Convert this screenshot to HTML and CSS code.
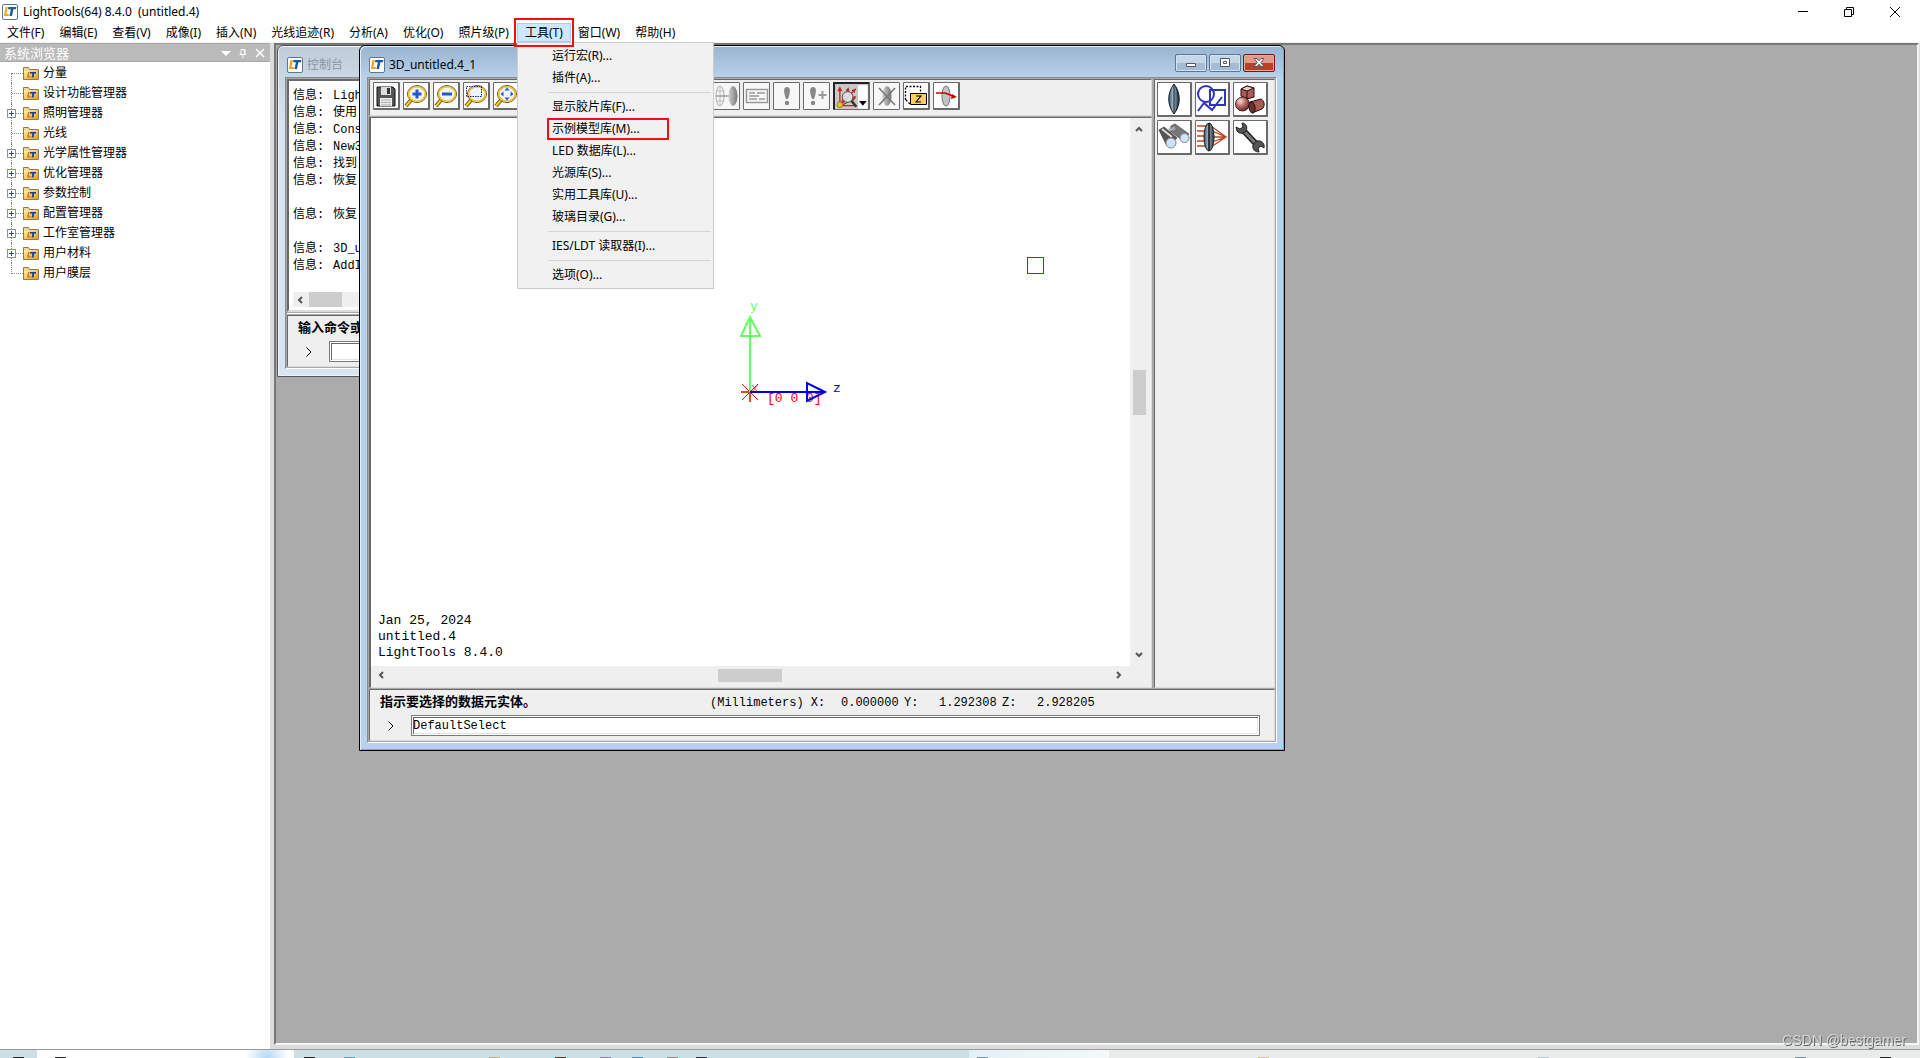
FILE: index.html
```
<!DOCTYPE html>
<html lang="zh-CN">
<head>
    <meta charset="UTF-8">
    <meta name="viewport" content="width=device-width, initial-scale=1.0">
    <title>LightTools(64) 8.4.0 (untitled.4)</title>
    <link rel="stylesheet" href="styles.css">
</head>
<body>

    <!-- Shared icons -->
    <svg class="sprite" aria-hidden="true">
        <defs>
            <linearGradient id="folderFill" x1="0" y1="0" x2="1" y2="1">
                <stop offset="0" stop-color="#fff0a8"/><stop offset="1" stop-color="#e0a020"/>
            </linearGradient>
            <linearGradient id="glassFill" x1="0" y1="0" x2="1" y2="0">
                <stop offset="0" stop-color="#3c5468"/><stop offset=".4" stop-color="#9fb6c8"/><stop offset="1" stop-color="#26323e"/>
            </linearGradient>
            <linearGradient id="grayFill" x1="0" y1="0" x2="1" y2="0">
                <stop offset="0" stop-color="#d0d0d0"/><stop offset="1" stop-color="#777"/>
            </linearGradient>
            <radialGradient id="ballFill" cx=".35" cy=".3" r=".75">
                <stop offset="0" stop-color="#ffdcd6"/><stop offset=".5" stop-color="#b86a64"/><stop offset="1" stop-color="#5a2422"/>
            </radialGradient>
        </defs>
        <symbol id="logo" viewBox="0 0 16 16">
            <rect x=".5" y=".5" width="15" height="15" rx="1.5" fill="#fff" stroke="#5c7896"/>
            <path d="M3.5 3h2.3L4.4 10H7l-.4 2H1.8z" fill="#f0a818"/>
            <path d="M6.4 3h8l-.4 2.2h-2.6L10 12H7.5l1.4-6.8H6z" fill="#1c5a9c"/>
        </symbol>
        <symbol id="folder" viewBox="0 0 16 14">
            <path d="M.5 1.5h5l1 2h9v10H.5z" fill="#e9d9a0" stroke="#8f7a48"/>
            <path d="M1 4.5h14v8.5H1z" fill="url(#folderFill)"/>
            <path d="M5 6h1.6L6 10h1.5v1.6H4z" fill="#e07c10"/>
            <path d="M7 6h6v1.6h-1.8l-.7 4H8.7l.6-4H7z" fill="#173f9c"/>
        </symbol>
        <symbol id="save" viewBox="0 0 24 24">
            <path d="M3 3h16l2 2v17H3z" fill="#555" stroke="#111"/>
            <path d="M7 3h10v8H7z" fill="#ddd"/><path d="M13 4h3v6h-3z" fill="#333"/>
            <path d="M6 14h12v8H6z" fill="#eee"/><path d="M7 16h10M7 18.500h10M7 21h10" stroke="#aaa"/>
        </symbol>
        <symbol id="lens" viewBox="0 0 24 24">
            <path d="M7 16l-5 6" stroke="#6e5614" stroke-width="4"/><path d="M7 16l-5 6" stroke="#f2c838" stroke-width="2"/>
            <ellipse cx="13" cy="10" rx="9.500" ry="8.500" fill="#eef5fb" stroke="#6e5614"/>
            <ellipse cx="13" cy="10" rx="8.300" ry="7.300" fill="none" stroke="#edc030" stroke-width="1.600"/>
        </symbol>
        <symbol id="zoomIn" viewBox="0 0 24 24"><use href="#lens"/><path d="M13 5.500v9M8.500 10h9" stroke="#2858c8" stroke-width="3"/></symbol>
        <symbol id="zoomOut" viewBox="0 0 24 24"><use href="#lens"/><path d="M8 10h10" stroke="#2858c8" stroke-width="3"/></symbol>
        <symbol id="zoomBox" viewBox="0 0 24 24"><use href="#lens"/><path d="M2.500 2.500h15v10h-15z" fill="none" stroke="#112a88" stroke-dasharray="1.500 1"/></symbol>
        <symbol id="zoomFit" viewBox="0 0 24 24"><use href="#lens"/><path d="M13 3.500l2.500 3h-5zM13 16.500l-2.500-3h5zM6.500 10l3-2.500v5zM19.500 10l-3 2.500v-5z" fill="#2858c8"/></symbol>
        <symbol id="lensPair" viewBox="0 0 24 24">
            <ellipse cx="5" cy="12" rx="4" ry="10" fill="none" stroke="#aaa"/><path d="M5 2v20M1 7h8M1 17h8" stroke="#bbb"/>
            <path d="M1 12h14" stroke="#777"/><ellipse cx="18" cy="12" rx="4.500" ry="10" fill="url(#grayFill)"/>
        </symbol>
        <symbol id="card" viewBox="0 0 24 24">
            <path d="M1.500 5.500h21v13h-21z" fill="#f7f7f7" stroke="#999" stroke-width="1.500"/>
            <path d="M4 9h6M12 9h8M4 12h10M4 15h8M14 15h6" stroke="#999" stroke-width="1.500"/>
        </symbol>
        <symbol id="bang" viewBox="0 0 24 24">
            <path d="M12 3c4 0 3.500 5 1 12h-2c-2.500-7-3-12 1-12z" fill="#888"/><circle cx="12" cy="19" r="2.200" fill="#888"/>
        </symbol>
        <symbol id="bangPlus" viewBox="0 0 24 24">
            <path d="M8 3c4 0 3.500 5 1 12H7C4.500 8 4 3 8 3z" fill="#888"/><circle cx="8" cy="19" r="2.200" fill="#888"/>
            <path d="M17.500 7v8M13.500 11h8" stroke="#999" stroke-width="2"/>
        </symbol>
        <symbol id="rays" viewBox="0 0 24 24">
            <path d="M5 20V4M6 19L13 5M7 19L20 5M8 20l13-7M8 21h13" stroke="#c82018" stroke-width="1.300"/>
            <path d="M5 1l2.500 5h-5zM14 2l1 5-4-2zM22 3l-2 5-3-3zM22 11l-3 5-2-4z" fill="#c82018"/>
            <circle cx="5" cy="20" r="3" fill="#e8c030" stroke="#806010" stroke-width=".7"/>
            <circle cx="13" cy="12" r="5.500" fill="#e2e6ec" fill-opacity=".85" stroke="#555"/><path d="M17 16l5 6" stroke="#333" stroke-width="2.500"/>
        </symbol>
        <symbol id="noLens" viewBox="0 0 24 24">
            <ellipse cx="12" cy="12" rx="4.500" ry="10" fill="url(#grayFill)"/><path d="M4 4l16 17M20 4L4 21" stroke="#777" stroke-width="1.600"/>
        </symbol>
        <symbol id="zPlane" viewBox="0 0 24 24">
            <path d="M1.500 16V2.500h15V9M2 16l5 5" fill="none" stroke="#000" stroke-width="1.300" stroke-dasharray="2 1.500"/>
            <path d="M6.500 9.500h16v11h-16z" fill="#ffcf60" stroke="#000"/>
            <path d="M12 12h5l-5 6h5" fill="none" stroke="#000" stroke-width="1.100"/>
        </symbol>
        <symbol id="rayLens" viewBox="0 0 24 24">
            <ellipse cx="12" cy="12" rx="4" ry="10" fill="none" stroke="#666"/><path d="M10 3v18M12 2v20M14 3v18" stroke="#888"/>
            <path d="M2 9h9l8 3" fill="none" stroke="#c00000" stroke-width="1.500"/><path d="M23 13l-6 2 1-5z" fill="#c00000"/>
        </symbol>
        <symbol id="glass" viewBox="0 0 32 32">
            <path d="M16 1c7 9 7 21 0 30C9 22 9 10 16 1z" fill="url(#glassFill)" stroke="#10202c"/>
            <path d="M16 1v30M18 4c3 8 3 16 0 24" fill="none" stroke="#1a2c3a"/>
        </symbol>
        <symbol id="shapes" viewBox="0 0 32 32">
            <g fill="none" stroke="#2c34c0" stroke-width="2"><circle cx="10" cy="11" r="8"/><path d="M14 7h15v15H14zM2 28l6-8 8 7L26 14"/></g>
        </symbol>
        <symbol id="solids" viewBox="0 0 32 32">
            <path d="M7 6l6-3 7 2v9l-7 2-6-3z" fill="#a85c58" stroke="#2a0c0c"/><path d="M7 6l6 2 7-3-7-2z" fill="#f0cfc9" stroke="#2a0c0c"/><path d="M13 8v8" stroke="#2a0c0c"/>
            <circle cx="8.500" cy="21" r="7" fill="url(#ballFill)" stroke="#2a0c0c" stroke-width=".8"/>
            <path d="M16 19l11-3c4 2 4 8 1 10l-10 4z" fill="#a85c58" stroke="#2a0c0c"/><ellipse cx="18" cy="24.500" rx="3" ry="5.500" fill="#6e2e2c" stroke="#2a0c0c" transform="rotate(-10 18 24.500)"/>
        </symbol>
        <symbol id="binoculars" viewBox="0 0 32 32">
            <path d="M13 5l4-2 14 10-7 6-12-9z" fill="#777" stroke="#333" stroke-width=".6"/>
            <path d="M1 9l5-3 13 11-10 8z" fill="#555" stroke="#222" stroke-width=".6"/><path d="M4 8l10 8" stroke="#ddd" stroke-width="2"/>
            <path d="M11 9l6-2" stroke="#aaa" stroke-width="3"/>
            <circle cx="13" cy="22" r="5" fill="#cfe4fa" stroke="#888"/><circle cx="26.500" cy="17" r="4.500" fill="#cfe4fa" stroke="#888"/>
        </symbol>
        <symbol id="focus" viewBox="0 0 32 32">
            <path d="M1 5h10M1 10h10M1 15h10M1 20h10M1 25h10M15 5l15 11-15 10M16 10l14 6-14 5M16 16h14" fill="none" stroke="#b84828" stroke-width="1.300"/>
            <ellipse cx="13" cy="16" rx="5" ry="14" fill="url(#glassFill)" stroke="#222"/><path d="M13 2v28" stroke="#111" stroke-width="1.500"/>
        </symbol>
        <symbol id="wrench" viewBox="0 0 32 32">
            <path d="M9 9l15 16" stroke="#222" stroke-width="6"/><path d="M9 9l15 16" stroke="#777" stroke-width="3"/>
            <path d="M8 2c4 0 6 4 4 8-2 3-7 3-9 0l-1-4 4 2 3-2zM23 20c5-1 8 3 7 7l-3-2-3 2 1 4c-4 0-7-3-6-7 1-2 2-3 4-4z" fill="#555" stroke="#222"/>
        </symbol>
        <symbol id="chevron" viewBox="0 0 8 8"><path d="M6 1L3 4l3 3" fill="none" stroke="#555" stroke-width="2"/></symbol>
    </svg>

    <header class="titlebar">
        <svg class="logo"><use href="#logo"/></svg>
        <h1>LightTools(64) 8.4.0&nbsp; (untitled.4)</h1>
        <div class="titlebar-buttons">
            <button aria-label="最小化"><svg viewBox="0 0 10 10"><path d="M0 4.500h10"/></svg></button>
            <button aria-label="还原"><svg viewBox="0 0 10 10"><path d="M.5 2.500h7v7h-7zM2.500 2.500v-2h7v7h-2"/></svg></button>
            <button aria-label="关闭"><svg viewBox="0 0 10 10"><path d="M0 0l10 10M10 0L0 10"/></svg></button>
        </div>
    </header>

    <nav class="menubar">
        <button>文件(F)</button>
        <button>编辑(E)</button>
        <button>查看(V)</button>
        <button>成像(I)</button>
        <button>插入(N)</button>
        <button>光线追迹(R)</button>
        <button>分析(A)</button>
        <button>优化(O)</button>
        <button>照片级(P)</button>
        <div class="menu-holder">
            <button class="open" aria-expanded="true">工具(T)</button>
            <div class="dropdown">
                <button>运行宏(R)...</button>
                <button>插件(A)...</button>
                <hr>
                <button>显示胶片库(F)...</button>
                <button class="marked">示例模型库(M)...</button>
                <button>LED 数据库(L)...</button>
                <button>光源库(S)...</button>
                <button>实用工具库(U)...</button>
                <button>玻璃目录(G)...</button>
                <hr>
                <button>IES/LDT 读取器(I)...</button>
                <hr>
                <button>选项(O)...</button>
            </div>
        </div>
        <button>窗口(W)</button>
        <button>帮助(H)</button>
    </nav>

    <main class="workspace">
        <aside class="sidebar">
            <div class="sidebar-head">
                <h2>系统浏览器</h2>
                <button aria-label="选项"><svg viewBox="0 0 10 10"><path d="M0 3h10L5 8z" fill="#fff"/></svg></button>
                <button aria-label="固定"><svg viewBox="0 0 10 10"><path d="M3 6V1.500h4V6M1.500 6.500h7M5 6.500V10M6.500 2v4" fill="none" stroke="#fff"/></svg></button>
                <button aria-label="关闭"><svg viewBox="0 0 10 10"><path d="M1 1l8 8M9 1L1 9" stroke="#fff" stroke-width="1.500"/></svg></button>
            </div>
            <ul class="tree">
                <li><svg class="folder"><use href="#folder"/></svg>分量</li>
                <li><svg class="folder"><use href="#folder"/></svg>设计功能管理器</li>
                <li><button class="expand" aria-label="展开"></button><svg class="folder"><use href="#folder"/></svg>照明管理器</li>
                <li><svg class="folder"><use href="#folder"/></svg>光线</li>
                <li><button class="expand" aria-label="展开"></button><svg class="folder"><use href="#folder"/></svg>光学属性管理器</li>
                <li><button class="expand" aria-label="展开"></button><svg class="folder"><use href="#folder"/></svg>优化管理器</li>
                <li><button class="expand" aria-label="展开"></button><svg class="folder"><use href="#folder"/></svg>参数控制</li>
                <li><button class="expand" aria-label="展开"></button><svg class="folder"><use href="#folder"/></svg>配置管理器</li>
                <li><button class="expand" aria-label="展开"></button><svg class="folder"><use href="#folder"/></svg>工作室管理器</li>
                <li><button class="expand" aria-label="展开"></button><svg class="folder"><use href="#folder"/></svg>用户材料</li>
                <li><svg class="folder"><use href="#folder"/></svg>用户膜层</li>
            </ul>
        </aside>

        <div class="desktop">
            <!-- Console window -->
            <section class="window console">
                <div class="window-title">
                    <svg class="logo"><use href="#logo"/></svg>
                    <h2>控制台</h2>
                </div>
                <div class="client">
                    <div class="pane log">
                        <ul>
                            <li><span>信息:</span>Ligh</li>
                            <li><span>信息:</span>使用</li>
                            <li><span>信息:</span>Cons</li>
                            <li><span>信息:</span>New3</li>
                            <li><span>信息:</span>找到</li>
                            <li><span>信息:</span>恢复</li>
                            <li></li>
                            <li><span>信息:</span>恢复</li>
                            <li></li>
                            <li><span>信息:</span>3D_u</li>
                            <li><span>信息:</span>AddI</li>
                        </ul>
                        <div class="log-scroll">
                            <svg class="arrow"><use href="#chevron"/></svg>
                            <div class="thumb"></div>
                        </div>
                    </div>
                    <div class="pane command">
                        <label class="prompt" for="consoleInput">输入命令或</label>
                        <div class="command-row">
                            <svg class="caret" viewBox="0 0 6 10"><path d="M.5.5L5 5 .5 9.500"/></svg>
                            <input type="text" id="consoleInput">
                        </div>
                    </div>
                </div>
            </section>

            <!-- 3D view window -->
            <section class="window view3d">
                <div class="window-title">
                    <svg class="logo"><use href="#logo"/></svg>
                    <h2>3D_untitled.4_1</h2>
                    <div class="window-buttons">
                        <button aria-label="最小化"><svg viewBox="0 0 12 10"><path d="M1.500 5.500h9v3h-9z"/></svg></button>
                        <button aria-label="最大化"><svg viewBox="0 0 12 10"><path d="M1.500.5h9v8h-9zM4.500 3.500h3v2h-3z"/></svg></button>
                        <button class="close" aria-label="关闭"><svg viewBox="0 0 12 10"><path d="M1 .5h3l2 2.300L8 .5h3L7.800 4.500 11 8.500H8L6 6.200 4 8.500H1l3.200-4z"/></svg></button>
                    </div>
                </div>
                <div class="client">
                    <div class="view-main">
                        <div class="view-left">
                            <div class="pane toolbar">
                                <button aria-label="保存"><svg><use href="#save"/></svg></button>
                                <button aria-label="放大"><svg><use href="#zoomIn"/></svg></button>
                                <button aria-label="缩小"><svg><use href="#zoomOut"/></svg></button>
                                <button aria-label="框选缩放"><svg><use href="#zoomBox"/></svg></button>
                                <button aria-label="适合窗口"><svg><use href="#zoomFit"/></svg></button>
                                <button aria-label="平移"></button>
                                <button aria-label="旋转"></button>
                                <button aria-label="视图"></button>
                                <button aria-label="着色"></button>
                                <button aria-label="线框"></button>
                                <button class="wide" aria-label="显示方式"></button>
                                <button disabled aria-label="透镜"><svg><use href="#lensPair"/></svg></button>
                                <button disabled aria-label="属性"><svg><use href="#card"/></svg></button>
                                <button disabled aria-label="运行"><svg><use href="#bang"/></svg></button>
                                <button disabled aria-label="继续运行"><svg><use href="#bangPlus"/></svg></button>
                                <button class="wide pressed" aria-label="光线预览">
                                    <svg><use href="#rays"/></svg>
                                    <svg class="drop" viewBox="0 0 10 24"><path d="M0 0h10v24H0z" fill="#fff"/><path d="M1 16h8l-4 5z"/></svg>
                                </button>
                                <button disabled aria-label="删除光线"><svg><use href="#noLens"/></svg></button>
                                <button aria-label="Z 平面"><svg><use href="#zPlane"/></svg></button>
                                <button aria-label="光线透镜"><svg><use href="#rayLens"/></svg></button>
                            </div>
                            <div class="pane viewport">
                                <div class="canvas">
                                    <svg class="scene">
                                        <rect x="656.500" y="139.500" width="16" height="16" fill="none" stroke="#f00000"/>
                                        <g class="scene-text">
                                            <text x="396" y="284" fill="#f00000">[0 0 0]</text>
                                            <text x="379" y="192" fill="#66ff66">y</text>
                                            <text x="462" y="274" fill="#0000d8">z</text>
                                            <text x="380" y="274" fill="#d08070">x</text>
                                        </g>
                                        <path d="M371 266l16 16M387 266l-16 16" stroke="#c02010"/>
                                        <path d="M370 274h18M379 274v10" stroke="#d05030" stroke-width="2"/>
                                        <path d="M379 274v-74M379 199l-9 19h19z" fill="none" stroke="#66ff66" stroke-width="2"/>
                                        <path d="M379 274h74M454 274l-18-9v18z" fill="none" stroke="#0000d8" stroke-width="2"/>
                                    </svg>
                                    <p>Jan 25, 2024</p>
                                    <p>untitled.4</p>
                                    <p>LightTools 8.4.0</p>
                                </div>
                                <div class="scroll-y">
                                    <svg class="arrow up"><use href="#chevron"/></svg>
                                    <div class="thumb"></div>
                                    <svg class="arrow down"><use href="#chevron"/></svg>
                                </div>
                                <div class="scroll-x">
                                    <svg class="arrow"><use href="#chevron"/></svg>
                                    <div class="thumb"></div>
                                    <svg class="arrow right"><use href="#chevron"/></svg>
                                </div>
                            </div>
                        </div>
                        <div class="pane palette">
                            <button aria-label="透镜"><svg><use href="#glass"/></svg></button>
                            <button aria-label="图形"><svg><use href="#shapes"/></svg></button>
                            <button aria-label="实体"><svg><use href="#solids"/></svg></button>
                            <button aria-label="查看"><svg><use href="#binoculars"/></svg></button>
                            <button aria-label="光线"><svg><use href="#focus"/></svg></button>
                            <button aria-label="工具"><svg><use href="#wrench"/></svg></button>
                        </div>
                    </div>
                    <div class="pane command">
                        <div class="status">
                            <label class="prompt" for="viewInput">指示要选择的数据元实体。</label>
                            <div class="coords">
                                <span>(Millimeters) X:</span><span>0.000000</span>
                                <span>Y:</span><span>1.292308</span>
                                <span>Z:</span><span>2.928205</span>
                            </div>
                        </div>
                        <div class="command-row">
                            <svg class="caret" viewBox="0 0 6 10"><path d="M.5.5L5 5 .5 9.500"/></svg>
                            <input type="text" id="viewInput" value="DefaultSelect">
                        </div>
                    </div>
                </div>
            </section>
        </div>
    </main>

    <footer class="taskbar">
        <div class="start"><i class="dark"></i></div>
        <div class="search"><i class="dark"></i></div>
        <div class="tasks">
            <i class="dark"></i><i class="teal"></i><i class="orange"></i><i class="red"></i><i class="purple"></i><i class="blue"></i><i class="rose"></i><i class="navy"></i>
        </div>
        <div class="active-task"><i class="slate"></i></div>
        <div class="tray"><i class="yellow"></i><i class="sky"></i><i class="slate"></i><i class="dark"></i></div>
    </footer>
    <div class="watermark">CSDN @bestgamer</div>

</body>
</html>
```
FILE: styles.css
```
* {
    box-sizing: border-box;
}

body {
    margin: 0;
    height: 100vh;
    display: flex;
    flex-direction: column;
    overflow: hidden;
    background: #fff;
    color: #000;
    font: 12px/16px "Noto Sans", "Noto Sans CJK SC", sans-serif;
}

h1, h2, p, ul {
    margin: 0;
    padding: 0;
    font-size: 12px;
    font-weight: normal;
    list-style: none;
}

button {
    margin: 0;
    padding: 0;
    border: 0;
    background: none;
    color: inherit;
    font: inherit;
}

svg {
    display: block;
}

.sprite {
    position: absolute;
    width: 0;
    height: 0;
}

.logo {
    width: 16px;
    height: 16px;
    flex: none;
}

/* Title bar and menus */
.titlebar {
    display: flex;
    align-items: center;
    gap: 5px;
    height: 23px;
    padding-left: 2px;
}

.titlebar-buttons {
    display: flex;
    margin-left: auto;
    padding-right: 2px;
}

.titlebar-buttons button {
    width: 46px;
    height: 20px;
    display: grid;
    place-items: center;
}

.titlebar-buttons svg {
    width: 10px;
    height: 10px;
    fill: none;
    stroke: #000;
}

.menubar {
    display: flex;
    height: 19px;
}

.menubar button {
    display: block;
    padding: 0 8px 0 7px;
    line-height: 19px;
    white-space: nowrap;
}

.menu-holder {
    position: relative;
    z-index: 10;
}

.menubar .open {
    padding: 0 8px;
    background: #cce8ff;
    box-shadow: inset 0 0 0 1px #99d1ff;
}

.menu-holder::after {
    content: "";
    position: absolute;
    inset: -5px -3px;
    border: 2px solid #f01010;
    pointer-events: none;
}

.dropdown {
    position: absolute;
    top: 100%;
    left: 0;
    width: 197px;
    padding: 2px;
    background: #f1f1f1;
    border: 1px solid #ccc;
}

.menubar .dropdown button {
    width: 100%;
    padding: 0 0 0 32px;
    line-height: 22px;
    text-align: left;
}

.menubar .dropdown .marked {
    width: 122px;
    margin-left: 27px;
    padding-left: 5px;
    line-height: 22px;
    outline: 2px solid #f01010;
    outline-offset: -2px;
}

.dropdown hr {
    margin: 3px 0 3px 28px;
    border: 0;
    border-top: 1px solid #d5d5d5;
}

/* Browser tree */
.workspace {
    flex: 1;
    min-height: 0;
    display: flex;
    border-top: 1px solid #f0f0f0;
    background: #dcdcdc;
}

.sidebar {
    width: 270px;
    background: #fff;
}

.sidebar-head {
    display: flex;
    align-items: center;
    gap: 7px;
    height: 19px;
    padding: 0 5px 0 4px;
    background: #bababa;
    border: solid #a8a8a8;
    border-width: 1px 0;
    color: #fff;
}

.sidebar-head h2 {
    flex: 1;
    font-size: 13px;
}

.sidebar-head svg {
    width: 10px;
    height: 10px;
}

.tree {
    padding: 1px 0 0 7px;
}

.tree li {
    display: flex;
    align-items: center;
    gap: 4px;
    height: 20px;
    padding-left: 16px;
    position: relative;
}

.tree li::before {
    content: "";
    position: absolute;
    left: 4px;
    top: 0;
    bottom: 0;
    width: 11px;
    border-left: 1px dotted #888;
    background: repeating-linear-gradient(90deg, #888 0 1px, transparent 1px 2px) 0 10px / 11px 1px no-repeat;
}

.tree li:first-child::before {
    top: 10px;
    background-position: 0 0;
}

.tree li:last-child::before {
    bottom: 9px;
}

.folder {
    width: 16px;
    height: 14px;
}

.expand {
    position: absolute;
    left: 0;
    top: 6px;
    width: 9px;
    height: 9px;
    border: 1px solid #919191;
    background:
        linear-gradient(#2b4a9a, #2b4a9a) center / 5px 1px no-repeat,
        linear-gradient(#2b4a9a, #2b4a9a) center / 1px 5px no-repeat,
        #fff;
}

/* Desktop area with child windows */
.desktop {
    flex: 1;
    position: relative;
    overflow: hidden;
    margin: 0 1px 5px 4px;
    background: #ababab;
    border: 2px solid;
    border-color: #777 #f4f4f4 #f4f4f4 #777;
}

.window {
    position: absolute;
    top: 0;
    display: flex;
    flex-direction: column;
    padding: 0 7px 7px;
    border: 1px solid #000;
    border-radius: 6px 6px 0 0;
}

.console {
    left: 1px;
    width: 300px;
    height: 332px;
    border-color: #555;
    background: linear-gradient(#bfcddb, #d7e4f2 80px);
    box-shadow: inset 0 0 0 1px #eaf2fa;
}

.view3d {
    left: 83px;
    width: 926px;
    height: 706px;
    background: linear-gradient(#99b4d1, #b9d1ea 32px);
    box-shadow: inset 1px 1px 0 #e4eefa, inset -1px -1px 0 #3cc0dc;
}

.window-title {
    display: flex;
    align-items: center;
    gap: 4px;
    height: 31px;
    padding: 6px 2px 0;
}

.console h2 {
    color: #8b939c;
}

.window-buttons {
    display: flex;
    gap: 2px;
    margin: 0 0 3px auto;
}

.window-buttons button {
    display: grid;
    place-items: center;
    width: 32px;
    height: 18px;
    border: 1px solid #5c7590;
    border-radius: 2px;
    background: linear-gradient(#c5d6e8 50%, #a4bcd6 50%);
    box-shadow: inset 0 0 0 1px #d5e3f1;
}

.window-buttons svg {
    width: 12px;
    height: 10px;
    fill: #fff;
    stroke: #505868;
}

.window-buttons .close {
    border-color: #6a1e18;
    background: linear-gradient(#e09a8c 50%, #bc4028 50%);
    box-shadow: inset 0 0 0 1px #e8a898;
}

.client {
    flex: 1;
    min-height: 0;
    display: flex;
    flex-direction: column;
    gap: 1px;
    border: 2px solid;
    border-color: #8c8c8c #fff #fff #8c8c8c;
    background: #fff;
}

.pane {
    background: #efefef;
    border: 1px solid;
    border-color: #696969 #dcdcdc #dcdcdc #696969;
    box-shadow: 0 0 0 1px #a8a8a8;
}

.log {
    flex: 1;
    display: flex;
    flex-direction: column;
    margin-bottom: 2px;
    padding: 3px 3px 3px 4px;
    background: #fff;
    border-width: 2px;
}

.log ul {
    flex: 1;
    padding-top: 4px;
    font: 12px/17px "Liberation Mono", "Noto Sans CJK SC", monospace;
}

.log li {
    display: flex;
    height: 17px;
}

.log span {
    width: 40px;
}

.log-scroll {
    display: flex;
    align-items: center;
    gap: 5px;
    height: 15px;
    padding-left: 3px;
    background: #efefef;
}

.log .thumb {
    width: 33px;
    height: 15px;
}

.thumb {
    background: #cdcdcd;
}

.arrow {
    width: 8px;
    height: 8px;
}

.up {
    transform: rotate(90deg);
}

.down {
    transform: rotate(-90deg);
}

.right {
    transform: rotate(180deg);
}

/* Command line at the bottom of a window */
.command {
    height: 52px;
    padding: 5px 14px 0 10px;
    font: 12px/16px "Liberation Mono", "Noto Sans CJK SC", monospace;
}

.prompt {
    display: block;
    font-size: 13px;
    font-weight: bold;
}

.command-row {
    display: flex;
    align-items: center;
    gap: 17px;
    margin-top: 4px;
    padding-left: 8px;
}

.command-row input {
    flex: 1;
    min-width: 0;
    height: 21px;
    padding: 0 1px;
    border: 1px solid #7a7a7a;
    box-shadow: inset 0 0 0 1px #fff, inset 2px 2px 0 #696969, inset -2px -2px 0 #e3e3e3;
    background: #fff;
    border-radius: 0;
    font: inherit;
    outline: none;
}

.caret {
    width: 6px;
    height: 10px;
    fill: none;
    stroke: #000;
    overflow: visible;
}

.view3d .prompt {
    width: 330px;
}

.status {
    display: flex;
}

.coords {
    display: grid;
    grid-template-columns: 131px 63px 35px 63px 35px 63px;
    white-space: nowrap;
}

/* 3D view */
.view-main {
    flex: 1;
    min-height: 0;
    display: flex;
    gap: 2px;
}

.view-left {
    flex: 1;
    display: flex;
    flex-direction: column;
    gap: 1px;
}

.toolbar {
    display: flex;
    gap: 3px;
    height: 37px;
    padding: 2px 3px;
}

.toolbar button,
.palette button {
    display: flex;
    align-items: center;
    justify-content: center;
    flex: none;
    border: solid #6a6a6a;
    border-width: 1px 2px 2px 1px;
    border-radius: 1px;
    background: #fff;
}

.toolbar button {
    width: 27px;
    height: 28px;
}

.toolbar button:disabled {
    border-width: 1px;
    background: #f7f7f7;
}

.toolbar svg {
    width: 24px;
    height: 24px;
}

.toolbar .wide {
    width: 37px;
}

.toolbar .pressed {
    border-width: 2px 2px 1px 2px;
    border-left-color: #222;
    border-top-color: #222;
    background: #c8c8c8;
}

.toolbar .drop {
    width: 10px;
}

.viewport {
    flex: 1;
    display: grid;
    grid-template: 1fr 22px / 1fr 22px;
    border-left-width: 2px;
}

.canvas {
    position: relative;
    display: flex;
    flex-direction: column;
    justify-content: flex-end;
    padding: 0 0 4px 7px;
    background: #fff;
    font: 13px/16px "Liberation Mono", monospace;
}

.canvas p {
    font-size: 13px;
}

.scene {
    position: absolute;
    inset: 0;
    width: 100%;
    height: 100%;
}

.scene-text {
    font: 13px "Liberation Mono", monospace;
}

.scroll-y {
    display: flex;
    flex-direction: column;
    align-items: center;
    justify-content: space-between;
    padding: 7px 5px 6px 2px;
    border-left: 1px solid #fff;
}

.scroll-y .thumb {
    width: 13px;
    height: 45px;
}

.scroll-x {
    display: flex;
    align-items: center;
    justify-content: space-between;
    padding: 0 6px 3px;
    border-top: 1px solid #fff;
}

.scroll-x .thumb {
    width: 64px;
    height: 13px;
}

.palette {
    display: grid;
    grid-template-columns: repeat(3, 35px);
    align-content: start;
    gap: 3px;
    width: 121px;
    padding: 2px;
}

.palette button {
    width: 35px;
    height: 35px;
}

.palette svg {
    width: 32px;
    height: 32px;
}

/* Top edge of the system taskbar */
.taskbar {
    display: flex;
    height: 8px;
    background: #cbdfe5;
    margin-top: -1px;
    border-top: 1px solid #999;
    box-sizing: content-box;
}

.taskbar > div {
    display: flex;
    align-items: flex-end;
}

.taskbar i {
    width: 11px;
    height: 1px;
}

.start {
    width: 37px;
    justify-content: center;
}

.search {
    width: 257px;
    padding-left: 18px;
    background: radial-gradient(circle at 230px 8px, #b4d8f4, #fff 22px);
}

.taskbar .tasks {
    display: grid;
    grid-template-columns: 40px 145px 66px 45px 32px 35px 29px 16px;
    align-items: end;
    width: 675px;
    padding-left: 10px;
}

.active-task {
    width: 140px;
    padding-left: 8px;
    background: linear-gradient(90deg, #e4f1f4, #f4f8f8);
}

.taskbar .tray {
    display: grid;
    grid-template-columns: 280px 257px 85px 16px;
    align-items: end;
    flex: 1;
    padding-left: 149px;
    background: #e9ebeb;
}

.dark { background: #222; }
.teal { background: #30b8c0; }
.orange { background: #e0a060; }
.red { background: #a01818; }
.purple { background: #9080b0; }
.blue { background: #4090c0; }
.rose { background: #d06868; }
.navy { background: #283048; }
.slate { background: #7890a0; }
.yellow { background: #f0c840; }
.sky { background: #b8c8d4; }

.watermark {
    position: fixed;
    right: 14px;
    bottom: 9px;
    color: #d8d8d8;
    font: 14px/18px "Liberation Sans", sans-serif;
    text-shadow: 1px 1px 0 #666;
}
```
